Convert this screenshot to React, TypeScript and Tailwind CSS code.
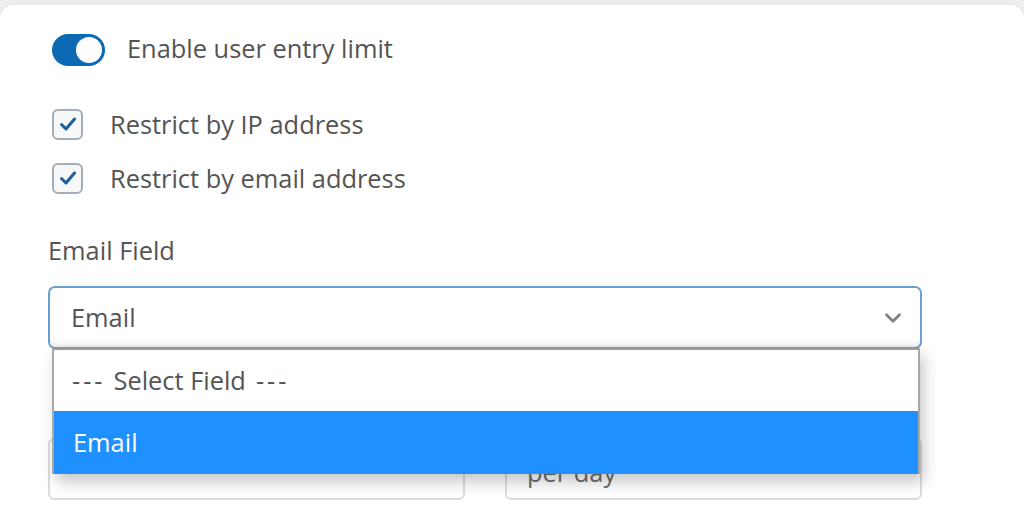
import { ChevronDown } from "lucide-react";

function Check() {
  return (
    <span className="flex h-[31px] w-[31px] items-center justify-center rounded-[6px] border-2 border-[#a6adb4] bg-[#f6f8fa]">
      <svg width="18" height="16" viewBox="0 0 18 16" fill="none">
        <path d="M2.5 8.5 L7 13 L15.5 3" stroke="#1f5f99" strokeWidth="3" strokeLinecap="round" strokeLinejoin="round" />
      </svg>
    </span>
  );
}

export default function App() {
  return (
    <div className="h-[532px] w-[1024px] overflow-hidden bg-[#f0f0f0] pt-[5px] font-['Open_Sans',sans-serif] text-[#545454]">
      <div className="relative h-[540px] rounded-[14px] bg-white shadow-[0_-1px_6px_rgba(0,0,0,0.06)]">
        <div className="flex flex-col pl-[48px] pr-[102px] pt-[27px]">
          <div className="flex items-center gap-[22px] pl-[4px]">
            <span className="mt-[1px] flex h-[32px] w-[53px] items-center justify-end rounded-full bg-[#0b6ab3] pr-[3px]">
              <span className="h-[26px] w-[26px] rounded-full bg-white" />
            </span>
            <span className="mb-[2px] text-[25.4px] leading-[32px]">Enable user entry limit</span>
          </div>

          <div className="mt-[42px] flex items-center gap-[27px] pl-[4px]">
            <Check />
            <span className="text-[25.4px] leading-[32px]">Restrict by IP address</span>
          </div>
          <div className="mt-[22px] flex items-center gap-[27px] pl-[4px]">
            <Check />
            <span className="text-[25.4px] leading-[32px]">Restrict by email address</span>
          </div>

          <div className="mt-[40px] text-[25.4px] leading-[32px]">Email Field</div>

          <div className="relative mt-[20px]">
            <div className="flex h-[63px] items-center justify-between rounded-[7px] border-2 border-[#6a9fcf] bg-white pl-[21px] pr-[14px] shadow-[inset_0_-8px_10px_-8px_rgba(0,0,0,0.15)]">
              <span className="text-[25.4px]">Email</span>
              <ChevronDown size={26} strokeWidth={2.5} className="text-[#808080]" />
            </div>

            <div className="absolute left-[4px] right-[2px] top-[62px] z-10 border-x-2 border-t-2 border-[#9a9a9a] border-x-[#a8a8a8] bg-white shadow-[4px_8px_14px_rgba(0,0,0,0.22)]">
              <div className="flex h-[61px] items-center pl-[18px] text-[25.4px]">
                <span className="tracking-[3px]">---</span>
                <span className="ml-[8px]">Select Field</span>
                <span className="ml-[10px] tracking-[3px]">---</span>
              </div>
              <div className="flex h-[63px] items-center bg-[#1e90ff] pl-[19px] text-[25.4px] text-white">Email</div>
            </div>
          </div>

          <div className="mt-[89px] grid grid-cols-2 gap-[40px]">
            <div className="h-[62px] rounded-[6px] border-2 border-[#dcdcdc] bg-white" />
            <div className="flex h-[62px] items-end rounded-[6px] border-2 border-[#dcdcdc] bg-white pb-[12px] pl-[20px]">
              <span className="text-[25.4px] leading-[28px] text-[#6b6b6b]">per day</span>
            </div>
          </div>
        </div>
      </div>
    </div>
  );
}
